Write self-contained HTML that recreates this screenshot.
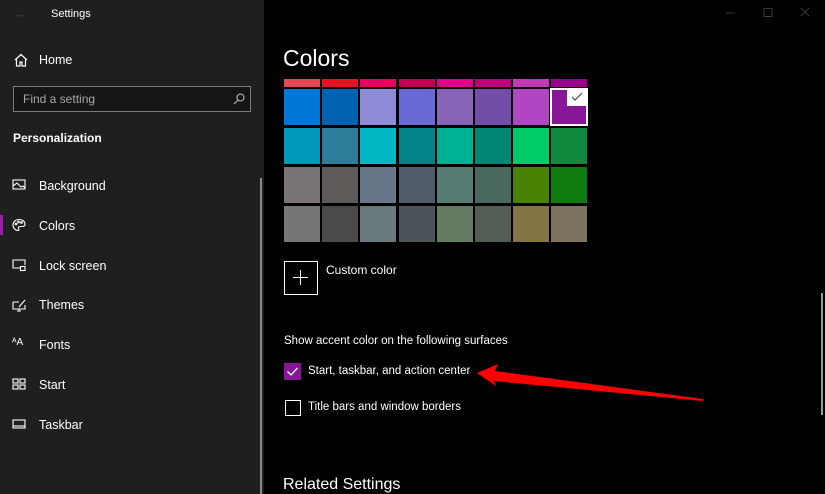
<!DOCTYPE html>
<html><head><meta charset="utf-8"><style>
*{margin:0;padding:0;box-sizing:border-box}
body{width:825px;height:494px;overflow:hidden;background:#000;font-family:"Liberation Sans",sans-serif;color:#fff;position:relative}
.side{position:absolute;left:0;top:0;width:264px;height:494px;background:#1f1f1f}
.a{position:absolute;white-space:nowrap}
.nav{font-size:12.5px;color:#fff}
.ic{position:absolute;width:14px;height:14px}
.sw{position:absolute;width:36px;height:36px}
.st{position:absolute;width:36px;height:8px;top:79px}
</style></head><body>
<div class="side">
 <div class="a" style="left:14px;top:6px;font-size:13px;color:#444">&#8592;</div>
 <div class="a" style="left:51px;top:8px;font-size:11px;color:#fff">Settings</div>
 <svg class="ic" style="left:14px;top:53px" viewBox="0 0 14 14" fill="none" stroke="#fff" stroke-width="1.2"><path d="M1 7L7 1.5 13 7M2.5 5.5V13H6V9h2v4h3.5V5.5"/></svg>
 <div class="a nav" style="left:39px;top:53px">Home</div>
 <div class="a" style="left:13px;top:86px;width:238px;height:26px;border:1.5px solid #7a7a7a;background:#151515"></div>
 <div class="a" style="left:23px;top:92px;font-size:12px;color:#a8a8a8">Find a setting</div>
 <svg class="ic" style="left:232px;top:92px" viewBox="0 0 14 14" fill="none" stroke="#bbb" stroke-width="1.1"><circle cx="8.5" cy="5.5" r="3.5"/><path d="M6 8L2 12"/></svg>
 <div class="a" style="left:13px;top:131px;font-size:12px;font-weight:bold">Personalization</div>
 <div class="a" style="left:260px;top:178px;width:2px;height:316px;background:#8a8a8a"></div>

 <svg class="ic" style="left:12px;top:178px" viewBox="0 0 14 14" fill="none" stroke="#fff" stroke-width="1.1"><rect x="1" y="2" width="12" height="9"/><path d="M1 8l4-3 4 4 2-1 2 2"/></svg>
 <div class="a nav" style="left:39px;top:179px">Background</div>
 <div class="a" style="left:0;top:215px;width:3px;height:20px;background:#9a1fa8"></div>
 <svg class="ic" style="left:12px;top:218px" viewBox="0 0 14 14" fill="none" stroke="#fff" stroke-width="1.1"><path d="M7 1.5C3.5 1.5 1 4 1 7s2.5 5.5 5 5.5c1.2 0 1-1.5.5-2.2s.2-1.8 1.5-1.8H10c2 0 3-1 3-2.5C13 3.5 10.5 1.5 7 1.5z"/><circle cx="4" cy="6" r=".8"/><circle cx="6.5" cy="4" r=".8"/><circle cx="9.5" cy="4.5" r=".8"/></svg>
 <div class="a nav" style="left:39px;top:219px">Colors</div>
 <svg class="ic" style="left:12px;top:258px" viewBox="0 0 14 14" fill="none" stroke="#fff" stroke-width="1.1"><path d="M8 10H1V2h12v5"/><rect x="8.5" y="8.5" width="4.5" height="4"/></svg>
 <div class="a nav" style="left:39px;top:259px">Lock screen</div>
 <svg class="ic" style="left:12px;top:298px" viewBox="0 0 14 14" fill="none" stroke="#fff" stroke-width="1.1"><path d="M1 4h6M1 4v7h12V7M5 13h4M7 11v2M7 9l6-7"/></svg>
 <div class="a nav" style="left:39px;top:298px">Themes</div>
 <div class="a" style="left:12px;top:337px;font-size:10px">ᴬA</div>
 <div class="a nav" style="left:39px;top:338px">Fonts</div>
 <svg class="ic" style="left:12px;top:377px" viewBox="0 0 14 14" fill="none" stroke="#fff" stroke-width="1.1"><rect x="1" y="2" width="5" height="4"/><rect x="8" y="2" width="5" height="4"/><rect x="1" y="8" width="5" height="4"/><rect x="8" y="8" width="5" height="4"/></svg>
 <div class="a nav" style="left:39px;top:378px">Start</div>
 <svg class="ic" style="left:12px;top:417px" viewBox="0 0 14 14" fill="none" stroke="#fff" stroke-width="1.1"><rect x="1" y="3" width="12" height="8"/><path d="M1 9h12"/></svg>
 <div class="a nav" style="left:39px;top:418px">Taskbar</div>
</div>

<svg class="a" style="left:720px;top:6px" width="100" height="14" viewBox="0 0 100 14" fill="none" stroke="#3a3a3a" stroke-width="1"><path d="M6 7h9"/><rect x="44" y="2.5" width="8" height="8"/><path d="M81 2l8 8M89 2l-8 8"/></svg>
<div class="a" style="left:821px;top:293px;width:2px;height:122px;background:#9a9a9a"></div>

<div class="a" style="left:283px;top:45px;font-size:23px">Colors</div>
<div id="g"></div>

<div class="a" style="left:284px;top:261px;width:34px;height:34px;border:1.5px solid #fff"></div>
<div class="a" style="left:293px;top:277px;width:15px;height:1.3px;background:#fff"></div>
<div class="a" style="left:300px;top:270px;width:1.3px;height:15px;background:#fff"></div>
<div class="a" style="left:326px;top:263px;font-size:12px">Custom color</div>

<div class="a" style="left:284px;top:335px;font-size:11.5px">Show accent color on the following surfaces</div>
<div class="a" style="left:284px;top:363px;width:17px;height:17px;background:#881798"></div>
<svg class="a" style="left:284px;top:363px" width="17" height="17" viewBox="0 0 17 17" fill="none" stroke="#fff" stroke-width="1.3"><path d="M3.5 8.5l3.5 3.5 6.5-7"/></svg>
<div class="a" style="left:308px;top:365px;font-size:11.5px">Start, taskbar, and action center</div>
<div class="a" style="left:285px;top:400px;width:16px;height:16px;border:1.5px solid #fff"></div>
<div class="a" style="left:308px;top:401px;font-size:11.5px">Title bars and window borders</div>

<svg class="a" style="left:0;top:0" width="825" height="494"><path d="M477 373L498 364 495 371 703 399 703 401 494 381 496 386Z" fill="#ff0000"/></svg>

<div class="a" style="left:283px;top:476px;font-size:16px">Related Settings</div>

<script>
var st=["#e74856","#e81123","#ea005e","#c30052","#e3008c","#bf0077","#c239b3","#9a0089"];
var r=[["#0078d7","#0063b1","#8e8cd8","#6b69d6","#8764b8","#744da9","#b146c2","#881798"],
["#0099bc","#2d7d9a","#00b7c3","#038387","#00b294","#018574","#00cc6a","#10893e"],
["#7a7574","#5d5a58","#68768a","#515c6b","#567c73","#486860","#498205","#107c10"],
["#767676","#4c4a48","#69797e","#4a5459","#647c64","#525e54","#847545","#7e735f"]];
var h="";
for(var c=0;c<8;c++){var x=284+c*38.2;
h+='<div class="st" style="left:'+x+'px;background:'+st[c]+'"></div>';
for(var i=0;i<4;i++){h+='<div class="sw" style="left:'+x+'px;top:'+(89+i*39)+'px;background:'+r[i][c]+'"></div>';}}
var sx=284+7*38.2;
h+='<div class="sw" style="left:'+(sx-1)+'px;top:88px;width:38px;height:38px;border:2px solid #fff;background:#881798"></div>';
h+='<div class="a" style="left:'+(sx+16)+'px;top:88px;width:21px;height:18px;background:#fff"></div>';
h+='<svg class="a" style="left:'+(sx+19)+'px;top:91px" width="14" height="12" viewBox="0 0 14 12" fill="none" stroke="#444" stroke-width="1.2"><path d="M2 6l3 3 7-7"/></svg>';
document.getElementById("g").innerHTML=h;
</script>
</body></html>
